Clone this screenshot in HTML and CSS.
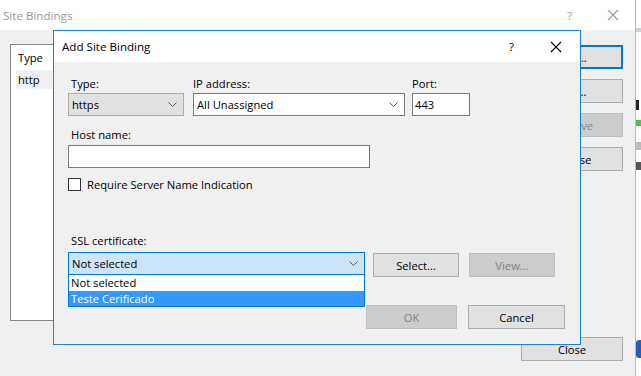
FILE: index.html
```html
<!DOCTYPE html>
<html>
<head>
<meta charset="utf-8">
<link rel="stylesheet" href="styles.css">
</head>
<body>
<div class="screen">
  <div class="outer">
    <div class="titlebar">
      <span class="title inactive">Site Bindings</span>
      <span class="help inactive">?</span>
      <span class="close-x">
        <svg width="12" height="12" viewBox="0 0 12 12"><path d="M1 1L11 11M11 1L1 11" stroke="#9a9a9a" stroke-width="1.1" fill="none"/></svg>
      </span>
    </div>
    <div class="outer-body">
      <div class="listview">
        <div class="lv-header">Type</div>
        <div class="lv-row">http</div>
      </div>
      <div class="side-buttons">
        <div class="btn focus">Add...</div>
        <div class="btn">Edit...</div>
        <div class="btn disabled">Remove</div>
        <div class="btn">Browse</div>
        <div class="btn close-btn">Close</div>
      </div>
    </div>
  </div>
  <div class="bg-strip">
    <div class="mark m1"></div>
    <div class="mark m2"></div>
    <div class="mark m3"></div>
    <div class="mark m4"></div>
    <div class="mark m5"></div>
    <div class="mark m6"></div>
  </div>

  <div class="dialog">
    <div class="dlg-titlebar">
      <span class="title">Add Site Binding</span>
      <span class="help">?</span>
      <span class="close-x">
        <svg width="12" height="12" viewBox="0 0 12 12"><path d="M1 1L11 11M11 1L1 11" stroke="#000" stroke-width="1.1" fill="none"/></svg>
      </span>
    </div>
    <div class="dlg-body">
      <div class="row fields">
        <div class="field f-type">
          <div class="label pad">Type:</div>
          <div class="combo gray"><span>https</span><svg class="chev" width="9" height="5" viewBox="0 0 9 5"><path d="M0.5 0.5L4.5 4.5L8.5 0.5" stroke="#606060" fill="none"/></svg></div>
        </div>
        <div class="field f-ip">
          <div class="label">IP address:</div>
          <div class="combo white"><span>All Unassigned</span><svg class="chev" width="9" height="5" viewBox="0 0 9 5"><path d="M0.5 0.5L4.5 4.5L8.5 0.5" stroke="#606060" fill="none"/></svg></div>
        </div>
        <div class="field f-port">
          <div class="label">Port:</div>
          <div class="textbox">443</div>
        </div>
      </div>
      <div class="label pad host-label">Host name:</div>
      <div class="textbox host"></div>
      <div class="check-row">
        <span class="checkbox"></span>
        <span class="check-label">Require Server Name Indication</span>
      </div>
      <div class="label pad ssl-label">SSL certificate:</div>
      <div class="row ssl-row">
        <div class="ssl-wrap">
          <div class="combo active"><span>Not selected</span><svg class="chev" width="9" height="5" viewBox="0 0 9 5"><path d="M0.5 0.5L4.5 4.5L8.5 0.5" stroke="#606060" fill="none"/></svg></div>
          <div class="dropdown">
            <div class="dd-item">Not selected</div>
            <div class="dd-item selected">Teste Cerificado</div>
          </div>
        </div>
        <div class="btn b-select">Select...</div>
        <div class="btn b-view disabled">View...</div>
      </div>
      <div class="row bottom">
        <div class="btn b-ok disabled">OK</div>
        <div class="btn b-cancel">Cancel</div>
      </div>
    </div>
  </div>
</div>
</body>
</html>
```
FILE: styles.css
```css
* { box-sizing: border-box; }
html, body { margin: 0; padding: 0; }
body {
  font-family: "Open Sans", "Noto Sans", sans-serif;
  font-size: 11.2px;
  color: #000;
  background: #fff;
}
.screen {
  position: relative;
  width: 641px;
  height: 376px;
  display: flex;
  overflow: hidden;
}
.outer {
  width: 636px;
  height: 376px;
  display: flex;
  flex-direction: column;
  background: #f0f0f0;
  border-right: 1px solid #b9b9b9;
}
.titlebar {
  height: 30px;
  background: #fff;
  display: flex;
  align-items: center;
  padding-left: 3px;
  font-size: 11.6px;
}
.inactive { color: #999; }
.titlebar .help { margin-left: auto; width: 10px; }
.titlebar .close-x { width: 12px; height: 12px; margin-left: 30px; margin-right: 16px; display: flex; }
.outer-body {
  flex: 1;
  display: flex;
  padding: 14px 12px 15px 10px;
  gap: 10px;
}
.listview {
  width: 501px;
  height: 277px;
  background: #fff;
  border: 1px solid #828790;
  padding-left: 5px;
}
.lv-header {
  height: 25px;
  line-height: 26px;
  padding-left: 2px;
}
.lv-row {
  height: 19px;
  line-height: 19px;
  background: #f0f0f0;
  padding-left: 2px;
}
.side-buttons {
  width: 102px;
  display: flex;
  flex-direction: column;
  padding-top: 1px;
  gap: 10px;
}
.btn {
  height: 24px;
  background: #e1e1e1;
  border: 1px solid #adadad;
  display: flex;
  align-items: center;
  justify-content: center;
}
.btn.focus { border: 2px solid #0078d7; }
.btn.disabled { background: #cccccc; border-color: #bfbfbf; color: #838383; }
.close-btn { margin-top: auto; }
.bg-strip {
  flex: 1;
  position: relative;
  background: #fff;
}
.mark { position: absolute; left: 0; width: 5px; }
.m1 { top: 28px; height: 4px; background: #c9d3dc; }
.m2 { top: 100px; height: 10px; background: #222; width: 3px; }
.m3 { top: 120px; height: 6px; background: #5cb85c; }
.m4 { top: 142px; height: 8px; background: #bbb; }
.m5 { top: 162px; height: 8px; background: #555; }
.m6 { top: 340px; height: 18px; background: #2a5db0; border-radius: 3px 0 0 3px; }

.dialog {
  position: absolute;
  left: 53px;
  top: 30px;
  width: 528px;
  height: 315px;
  border: 1px solid #1883d7;
  background: #f0f0f0;
  display: flex;
  flex-direction: column;
}
.dlg-titlebar {
  height: 31px;
  background: #fff;
  display: flex;
  align-items: center;
  padding-left: 8px;
  font-size: 11.6px;
}
.dlg-titlebar .help { margin-left: auto; width: 10px; }
.dlg-titlebar .close-x { width: 12px; height: 12px; margin-left: 31px; margin-right: 18px; display: flex; }
.dlg-body {
  flex: 1;
  padding: 14px 15px 0 14px;
}
.row { display: flex; }
.fields { gap: 0; }
.field { display: flex; flex-direction: column; }
.f-type { width: 116px; margin-right: 9px; }
.f-ip { width: 212px; margin-right: 7px; }
.f-port { width: 58px; }
.label { height: 15px; line-height: 15px; margin-bottom: 2px; }
.label.pad { padding-left: 3px; }
.combo {
  height: 23px;
  border: 1px solid #7a7a7a;
  display: flex;
  align-items: center;
  padding-left: 3px;
  padding-right: 6px;
}
.combo span { flex: 1; }
.combo.gray { background: #e1e1e1; border-color: #adadad; }
.combo.white { background: #fff; }
.combo.active { background: #cce4f7; border-color: #0078d7; }
.textbox {
  height: 23px;
  background: #fff;
  border: 1px solid #7a7a7a;
  padding-left: 2px;
  line-height: 21px;
}
.host-label { margin-top: 11px; margin-bottom: 3px; }
.textbox.host { width: 302px; }
.check-row {
  margin-top: 10px;
  height: 13px;
  display: flex;
  align-items: center;
}
.checkbox {
  width: 13px;
  height: 13px;
  border: 1px solid #333;
  background: #fff;
}
.check-label { margin-left: 6px; }
.ssl-label { margin-top: 42px; margin-bottom: 4px; }
.ssl-row { align-items: flex-start; }
.ssl-wrap { position: relative; width: 297px; margin-right: 8px; }
.dropdown {
  position: absolute;
  left: 0;
  top: 23px;
  width: 297px;
  background: #fff;
  border: 1px solid #0078d7;
  border-top: none;
  z-index: 2;
}
.dd-item { height: 16px; line-height: 15px; padding-left: 2px; }
.dd-item.selected { background: #3399ff; color: #fff; height: 15px; }
.b-select { width: 86px; margin-top: 1px; }
.b-view { width: 86px; margin-top: 1px; margin-left: 10px; }
.bottom { justify-content: flex-end; margin-top: 28px; gap: 11px; }
.b-ok { width: 91px; }
.b-cancel { width: 97px; }
```
